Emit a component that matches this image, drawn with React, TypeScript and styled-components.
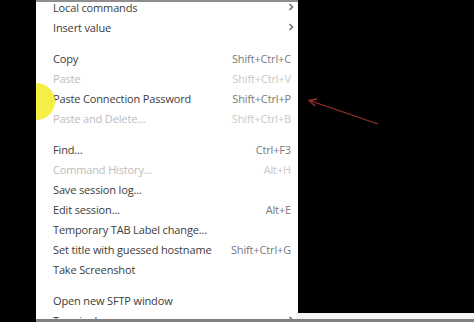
import React from "react";
import styled, { createGlobalStyle } from "styled-components";

const GlobalStyle = createGlobalStyle`
  body {
    margin: 0;
    background: #000;
    font-family: "Open Sans", "Noto Sans", sans-serif;
  }
`;

const Desktop = styled.div`
  position: relative;
  width: 474px;
  height: 322px;
  overflow: hidden;
  background: #000;
`;

const Menu = styled.div`
  position: relative;
  margin-left: 36px;
  width: 262px;
  height: 100%;
  box-sizing: border-box;
  background: #fff;
  border-top: 2px solid #8e8e8e;
  overflow: hidden;
`;

const List = styled.div`
  margin-top: -5px;
`;

const Item = styled.div<{ $disabled?: boolean }>`
  position: relative;
  display: flex;
  align-items: center;
  justify-content: space-between;
  height: 20px;
  padding: 0 7px 0 17px;
  font-size: 11px;
  letter-spacing: -0.15px;
  color: ${(p) => (p.$disabled ? "#bcbcbc" : "#3c3c3c")};
  white-space: nowrap;
`;

const Shortcut = styled.span<{ $disabled?: boolean }>`
  color: ${(p) => (p.$disabled ? "#c8c8c8" : "#7a7a7a")};
`;

const Chevron = styled.svg`
  margin-right: -3px;
`;

const Separator = styled.div`
  height: 11px;
`;

const CursorGlow = styled.div`
  position: absolute;
  left: -18px;
  top: 81px;
  width: 37px;
  height: 37px;
  border-radius: 50%;
  background: #f5ef45;
  filter: blur(0.6px);
`;

const Annotation = styled.svg`
  position: absolute;
  left: 0;
  top: 0;
`;

const LowerWindow = styled.div`
  position: absolute;
  left: 36px;
  right: 0;
  bottom: 0;
  height: 3px;
  background: #808080;
`;

const LowerStrip = styled.div`
  position: absolute;
  left: 296px;
  right: 0;
  bottom: 3px;
  height: 6px;
  background: #f4f4f4;
`;

type Entry =
  | { sep: true }
  | { label: string; keys?: string; off?: boolean; sub?: boolean; sep?: false };

const entries: Entry[] = [
  { label: "Local commands", sub: true },
  { label: "Insert value", sub: true },
  { sep: true },
  { label: "Copy", keys: "Shift+Ctrl+C" },
  { label: "Paste", keys: "Shift+Ctrl+V", off: true },
  { label: "Paste Connection Password", keys: "Shift+Ctrl+P" },
  { label: "Paste and Delete...", keys: "Shift+Ctrl+B", off: true },
  { sep: true },
  { label: "Find...", keys: "Ctrl+F3" },
  { label: "Command History...", keys: "Alt+H", off: true },
  { label: "Save session log..." },
  { label: "Edit session...", keys: "Alt+E" },
  { label: "Temporary TAB Label change..." },
  { label: "Set title with guessed hostname", keys: "Shift+Ctrl+G" },
  { label: "Take Screenshot" },
  { sep: true },
  { label: "Open new SFTP window" },
  { label: "Terminal", sub: true },
];

const SubArrow = () => (
  <Chevron width="6" height="8" viewBox="0 0 6 8">
    <polyline points="1.5,1 4.5,4 1.5,7" fill="none" stroke="#666" strokeWidth="1.4" />
  </Chevron>
);

export default function App() {
  return (
    <Desktop>
      <GlobalStyle />
      <Menu>
        <List>
          {entries.map((e, i) =>
            e.sep ? (
              <Separator key={i} />
            ) : (
              <Item key={i} $disabled={e.off}>
                <span>{e.label}</span>
                {e.keys && <Shortcut $disabled={e.off}>{e.keys}</Shortcut>}
                {e.sub && <SubArrow />}
              </Item>
            )
          )}
        </List>
        <CursorGlow />
      </Menu>
      <LowerStrip />
      <LowerWindow />
      <Annotation width="474" height="322">
        <line x1="378" y1="124" x2="311" y2="101" stroke="#9a2f2f" strokeWidth="1.3" />
        <polyline points="317,99 309,100.5 315,106" fill="none" stroke="#9a2f2f" strokeWidth="1.3" />
      </Annotation>
    </Desktop>
  );
}
